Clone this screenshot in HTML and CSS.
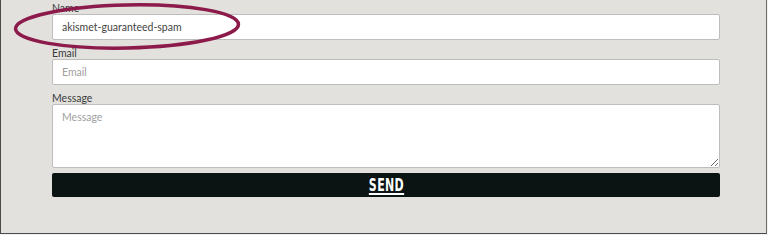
FILE: index.html
```html
<!DOCTYPE html>
<html lang="en">
<head>
    <meta charset="UTF-8">
    <meta name="viewport" content="width=device-width, initial-scale=1.0">
    <title>Contact</title>
    <link rel="stylesheet" href="styles.css">
</head>
<body>
    <div class="frame">
        <form class="contact-form" onsubmit="return false">
            <label class="field-label" for="name">Name</label>
            <input type="text" id="name" class="field-input" value="akismet-guaranteed-spam">

            <label class="field-label" for="email">Email</label>
            <input type="email" id="email" class="field-input" placeholder="Email">

            <label class="field-label" for="message">Message</label>
            <textarea id="message" class="field-textarea" placeholder="Message"></textarea>

            <button type="submit" class="send-btn"><span>SEND</span></button>
        </form>

        <!-- highlight drawn over the name field -->
        <svg class="highlight" width="260" height="56" viewBox="0 0 260 56">
            <ellipse cx="126" cy="26.5" rx="111.5" ry="21.5" fill="none" stroke="#8c1a4a" stroke-width="3.5" transform="rotate(-1.2 126 26.5)"/>
        </svg>
    </div>
</body>
</html>
```

FILE: styles.css
```css
body {
    margin: 0;
    background: #f2f2f0;
    font-family: Lato, "Open Sans", sans-serif;
}
.frame {
    position: relative;
    width: 765px;
    height: 233px;
    background: #e2e1dd;
    border-left: 1px solid #4a4a4a;
    border-right: 1px solid #6a6a6a;
    border-bottom: 1px solid #4a4a4a;
    overflow: hidden;
}
.contact-form {
    display: flex;
    flex-direction: column;
    width: 668px;
    padding-left: 51px;
}
.field-label {
    height: 13px;
    line-height: 16px;
    font-size: 10.5px;
    color: #3a3c3c;
}
.field-input,
.field-textarea {
    box-sizing: border-box;
    width: 668px;
    margin: 1px 0 5px;
    padding: 0 9px;
    border: 1px solid #bdbdbd;
    border-radius: 2px;
    background: #fff;
    font-family: Lato, "Open Sans", sans-serif;
    font-size: 10.5px;
    color: #444;
}
.field-input {
    height: 26px;
}
.field-textarea {
    height: 64px;
    margin-bottom: 5px;
    padding-top: 6px;
    resize: vertical;
}
.field-input::placeholder,
.field-textarea::placeholder {
    color: #a0a0a0;
}
.send-btn {
    height: 24px;
    width: 668px;
    padding: 0;
    border: none;
    border-radius: 2px;
    background: #0c1413;
    color: #fff;
    cursor: pointer;
}
.send-btn span {
    display: inline-block;
    transform: scaleX(0.72);
    font-family: "DejaVu Sans Condensed", sans-serif;
    font-weight: bold;
    font-size: 17px;
    letter-spacing: 0.5px;
    text-decoration: underline;
    text-decoration-thickness: 2px;
    text-underline-offset: 2px;
}
.highlight {
    position: absolute;
    left: 0;
    top: 0;
}
```
